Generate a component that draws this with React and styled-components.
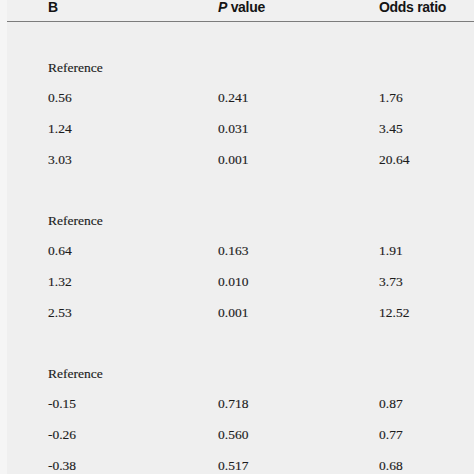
import React from "react";
import styled, { createGlobalStyle } from "styled-components";

const GlobalStyle = createGlobalStyle`
  html, body {
    margin: 0;
    padding: 0;
    background: #f5f5f5;
    overflow: hidden;
  }
`;

const groups = [
  [
    ["0.56", "0.241", "1.76"],
    ["1.24", "0.031", "3.45"],
    ["3.03", "0.001", "20.64"],
  ],
  [
    ["0.64", "0.163", "1.91"],
    ["1.32", "0.010", "3.73"],
    ["2.53", "0.001", "12.52"],
  ],
  [
    ["-0.15", "0.718", "0.87"],
    ["-0.26", "0.560", "0.77"],
    ["-0.38", "0.517", "0.68"],
  ],
];

export default function App() {
  return (
    <>
      <GlobalStyle />
      <Table>
        <HeaderRow>
          <HeadCell>B</HeadCell>
          <HeadCell>
            <i>P</i> value
          </HeadCell>
          <HeadCell>Odds ratio</HeadCell>
        </HeaderRow>
        {groups.map((rows, g) => (
          <Group key={g}>
            <Spacer />
            <Row>
              <Cell>Reference</Cell>
              <Cell />
              <Cell />
            </Row>
            {rows.map((r, i) => (
              <Row key={i}>
                {r.map((v, j) => (
                  <Cell key={j}>{v}</Cell>
                ))}
              </Row>
            ))}
          </Group>
        ))}
      </Table>
    </>
  );
}

const Table = styled.div`
  margin-left: 7px;
  height: 474px;
  background: #efefef;
  color: #1c1c1c;
`;

const cols = `
  display: grid;
  grid-template-columns: 170px 161px 1fr;
  padding-left: 41px;
`;

const HeaderRow = styled.div`
  ${cols}
  height: 21px;
  border-bottom: 1px solid #7c7c7c;
  background: #f0f0f0;
`;

const HeadCell = styled.div`
  font-family: "Liberation Sans", Arial, sans-serif;
  font-weight: 700;
  font-size: 14px;
  line-height: 14px;
  margin-top: -0.5px;
  color: #141414;
  letter-spacing: -0.3px;

  i {
    font-style: italic;
  }
`;

const Group = styled.div`
  display: flex;
  flex-direction: column;
`;

const Spacer = styled.div`
  height: 30.6px;
`;

const Row = styled.div`
  ${cols}
  height: 30.6px;
  align-items: center;
`;

const Cell = styled.div`
  font-family: "Liberation Serif", "Times New Roman", serif;
  font-size: 13.5px;
  line-height: 16px;
  -webkit-text-stroke: 0.15px #1c1c1c;
`;
